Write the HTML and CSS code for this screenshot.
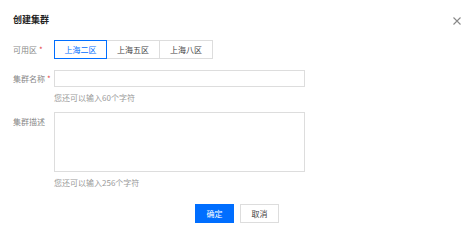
FILE: index.html
```html
<!DOCTYPE html>
<html lang="zh-CN">
<head>
  <meta charset="UTF-8">
  <title>创建集群</title>
  <link rel="stylesheet" href="styles.css">
</head>
<body>

<div class="dialog">
  <div class="dlg-head">
    <h3>创建集群</h3>
    <span class="close">
      <svg width="8" height="8" viewBox="0 0 8 8"><path d="M0.5 0.5L7.5 7.5M7.5 0.5L0.5 7.5" stroke="#888" stroke-width="1.1" fill="none"/></svg>
    </span>
  </div>

  <div class="form">
    <div class="row row-zone">
      <label>可用区<i>*</i></label>
      <div class="seg">
        <button class="seg-btn selected">上海二区</button>
        <button class="seg-btn">上海五区</button>
        <button class="seg-btn">上海八区</button>
      </div>
    </div>

    <div class="row row-name">
      <label>集群名称<i>*</i></label>
      <input type="text" class="text-input">
    </div>
    <p class="hint">您还可以输入60个字符</p>

    <div class="row row-desc">
      <label>集群描述</label>
      <textarea class="text-area"></textarea>
    </div>
    <p class="hint">您还可以输入256个字符</p>
  </div>

  <div class="dlg-foot">
    <button class="btn primary">确定</button>
    <button class="btn">取消</button>
  </div>
</div>

</body>
</html>
```

FILE: styles.css
```css
body {
  margin: 0;
  background: #fff;
  font-family: "Noto Sans CJK SC", "Noto Sans", sans-serif;
  color: #444;
  font-size: 8px;
}
.dialog {
  padding: 0 13px;
}
.dlg-head {
  display: flex;
  justify-content: space-between;
  align-items: center;
  padding-top: 14px;
  height: 12px;
}
.dlg-head h3 {
  margin: 0;
  font-size: 9px;
  line-height: 12px;
  font-weight: bold;
  color: #222;
}
.close {
  display: flex;
  margin-right: 0;
  margin-top: 1px;
}
.form {
  margin-top: 14px;
}
.row {
  display: flex;
  align-items: center;
}
.row label {
  width: 41px;
  flex-shrink: 0;
  color: #888;
  line-height: 12px;
}
.row label i {
  font-style: normal;
  color: #e54545;
  margin-left: 2px;
}
.seg {
  display: flex;
}
.seg-btn {
  width: 54px;
  height: 19px;
  padding: 0;
  margin-left: -1px;
  border: 1px solid #ddd;
  background: #fff;
  color: #444;
  font-family: inherit;
  font-size: 8px;
}
.seg-btn:first-child {
  margin-left: 0;
  width: 53px;
}
.seg-btn.selected {
  border-color: #006eff;
  color: #006eff;
  position: relative;
  z-index: 1;
}
.row-name {
  margin-top: 11px;
}
.text-input {
  box-sizing: border-box;
  width: 251px;
  height: 17px;
  margin: 0;
  border: 1px solid #ddd;
  padding: 0 4px;
}
.hint {
  margin: 5px 0 0 41px;
  line-height: 12px;
  color: #999;
  font-size: 8px;
}
.row-desc {
  margin-top: 8px;
  align-items: flex-start;
}
.row-desc label {
  padding-top: 4px;
}
.text-area {
  box-sizing: border-box;
  width: 251px;
  height: 60px;
  margin: 0;
  border: 1px solid #ddd;
  resize: none;
  display: block;
}
.dlg-foot {
  display: flex;
  justify-content: center;
  gap: 6px;
  margin-top: 15px;
}
.btn {
  width: 39px;
  height: 19px;
  padding: 0;
  border: 1px solid #ddd;
  background: #fff;
  color: #444;
  font-family: inherit;
  font-size: 8px;
}
.btn.primary {
  background: #006eff;
  border-color: #006eff;
  color: #fff;
}
```
